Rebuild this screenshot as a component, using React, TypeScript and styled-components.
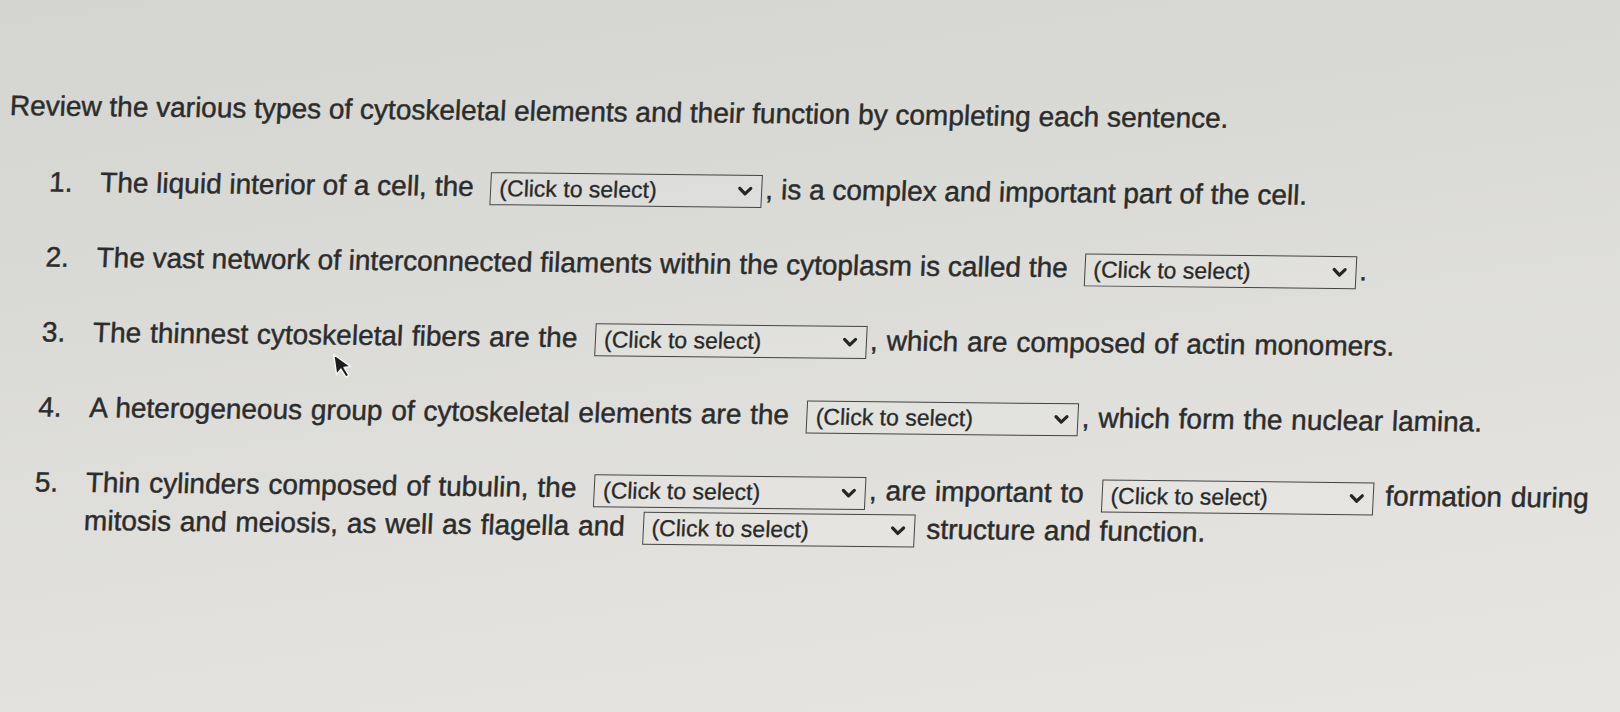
import React from 'react';
import styled, { createGlobalStyle } from 'styled-components';

const GlobalStyle = createGlobalStyle`
  html, body {
    margin: 0;
    padding: 0;
    overflow: hidden;
  }
  body {
    background: linear-gradient(172deg, #d4d4d1 0%, #dadad7 35%, #e2e1dd 70%, #e6e5e1 100%);
    font-family: "Liberation Sans", Arial, sans-serif;
    color: #2c2c2c;
  }
`;

const Page = styled.div`
  position: relative;
  width: 1620px;
  height: 712px;
  overflow: hidden;
`;

// the photo is taken at a slight angle, so the sheet is tilted a little
const Sheet = styled.div`
  width: 1660px;
  padding: 87px 0 0 15px;
  box-sizing: border-box;
  transform-origin: 0 0;
  transform: rotate(0.6deg) skewX(-2.15deg);
  -webkit-text-stroke: 0.45px #2c2c2c;
`;

const Heading = styled.p`
  margin: 0 0 39px;
  font-size: 28px;
  line-height: 37px;
`;

const List = styled.ol`
  list-style: none;
  margin: 0;
  padding: 0 0 0 43px;
  display: flex;
  flex-direction: column;
  gap: 38px;
`;

const Item = styled.li<{ $spacing?: number }>`
  display: flex;
  font-size: 28px;
  line-height: 37px;
  word-spacing: ${(p) => p.$spacing ?? 0}px;
`;

const Num = styled.span`
  flex: 0 0 51px;
`;

const Sentence = styled.span`
  flex: 1;
`;

const SelectBox = styled.span`
  display: inline-flex;
  align-items: center;
  justify-content: space-between;
  box-sizing: border-box;
  width: 272px;
  height: 33px;
  margin: 0 3px 0 9px;
  padding: 0 8px 0 8px;
  vertical-align: middle;
  border: 1px solid #444;
  background: rgba(255, 255, 255, 0.12);
  font-family: "Liberation Sans", Arial, sans-serif;
  font-size: 23px;
  line-height: 1;
  word-spacing: 0;
  color: #2a2a2a;
  -webkit-text-stroke: 0.3px #2a2a2a;
`;

const Chevron = styled.svg`
  width: 16px;
  height: 11px;
  flex-shrink: 0;
`;

const Cursor = styled.svg`
  position: absolute;
  left: 333px;
  top: 352px;
  width: 20px;
  height: 28px;
  transform: rotate(-8deg);
`;

function Select() {
  return (
    <SelectBox>
      (Click to select)
      <Chevron viewBox="0 0 16 11">
        <polyline
          points="2.5,2.5 8,8 13.5,2.5"
          fill="none"
          stroke="#262626"
          strokeWidth="3.2"
          strokeLinecap="round"
          strokeLinejoin="round"
        />
      </Chevron>
    </SelectBox>
  );
}

export default function App() {
  return (
    <>
      <GlobalStyle />
      <Page>
        <Sheet>
          <Heading>
            Review the various types of cytoskeletal elements and their function by completing each sentence.
          </Heading>
          <List>
            <Item>
              <Num>1.</Num>
              <Sentence>
                The liquid interior of a cell, the <Select />, is a complex and important part of the cell.
              </Sentence>
            </Item>
            <Item>
              <Num>2.</Num>
              <Sentence>
                The vast network of interconnected filaments within the cytoplasm is called the <Select />.
              </Sentence>
            </Item>
            <Item $spacing={1}>
              <Num>3.</Num>
              <Sentence>
                The thinnest cytoskeletal fibers are the <Select />, which are composed of actin monomers.
              </Sentence>
            </Item>
            <Item $spacing={1}>
              <Num>4.</Num>
              <Sentence>
                A heterogeneous group of cytoskeletal elements are the <Select />, which form the nuclear lamina.
              </Sentence>
            </Item>
            <Item $spacing={1}>
              <Num>5.</Num>
              <Sentence>
                Thin cylinders composed of tubulin, the <Select />, are important to <Select /> formation during
                mitosis and meiosis, as well as flagella and <Select /> structure and function.
              </Sentence>
            </Item>
          </List>
        </Sheet>
        <Cursor viewBox="0 0 14 22">
          <path
            d="M1 1 L1 17 L5 13.2 L8 20 L10.6 18.9 L7.7 12.3 L13 12.3 Z"
            fill="#1c1c1c"
            stroke="#f4f4f4"
            strokeWidth="1.2"
            strokeLinejoin="round"
          />
        </Cursor>
      </Page>
    </>
  );
}
